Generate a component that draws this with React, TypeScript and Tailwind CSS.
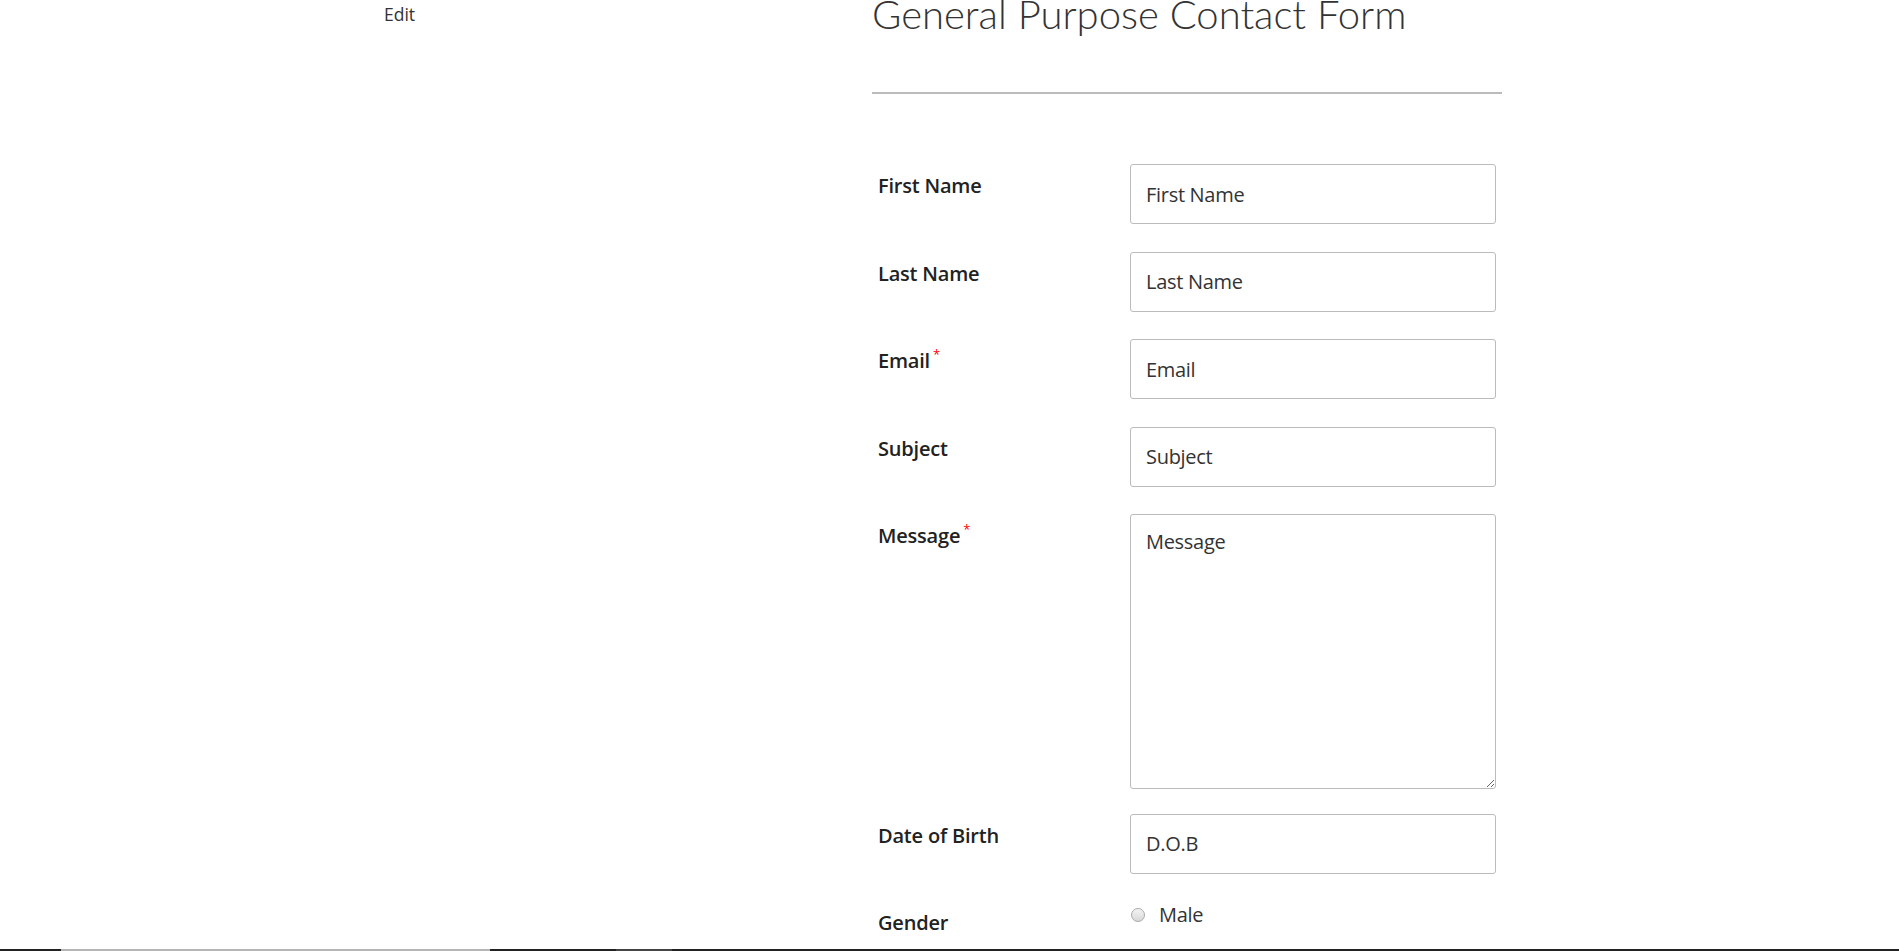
import React from 'react';

const BODY_FONT = { fontFamily: '"Open Sans", Lato, "Liberation Sans", sans-serif' };
const TITLE_FONT = { fontFamily: 'Lato, "Open Sans", sans-serif' };

const FIELDS = [
  { label: 'First Name', placeholder: 'First Name' },
  { label: 'Last Name', placeholder: 'Last Name' },
  { label: 'Email', placeholder: 'Email', required: true },
  { label: 'Subject', placeholder: 'Subject' },
];

function FieldLabel({ text, required }: { text: string; required?: boolean }) {
  return (
    <label className="pl-[6px] pt-[7px] text-[20px] font-semibold leading-[30px] tracking-[-0.2px] text-[#222]">
      {text}
      {required && <span className="relative -top-[9px] ml-[3px] text-[13px] font-normal text-[#ff0000]">*</span>}
    </label>
  );
}

const inputClass =
  'w-[366px] rounded-[3px] border border-[#bbb] bg-white px-[15px] text-[20px] tracking-[-0.3px] text-[#333] placeholder:text-[#333] outline-none';

export default function App() {
  return (
    <div className="flex h-[951px] w-full flex-col overflow-hidden bg-white" style={BODY_FONT}>
      <div className="flex min-h-0 flex-1 overflow-hidden">
        <div className="ml-[384px] w-[488px] shrink-0 pt-[2px] text-[17.5px] leading-[24px] text-[#333]">
          <a href="#">Edit</a>
        </div>

        <main className="w-[630px] shrink-0">
          <h1 className="-mt-[10px] text-[40px] font-light leading-[48px] text-[#333]" style={TITLE_FONT}>
            General Purpose Contact Form
          </h1>
          <div className="mt-[54px] h-[2px] w-[630px] bg-[#bbb]" />

          <form className="mt-[70px] flex flex-col gap-[27.5px]">
            {FIELDS.map((f) => (
              <div key={f.label} className="grid grid-cols-[258px_366px]">
                <FieldLabel text={f.label} required={f.required} />
                <input className={`${inputClass} h-[60px]`} placeholder={f.placeholder} />
              </div>
            ))}

            <div className="-mb-[3px] grid grid-cols-[258px_366px]">
              <FieldLabel text="Message" required />
              <textarea
                className={`${inputClass} block h-[275px] resize-y pt-[12px] leading-[30px]`}
                placeholder="Message"
              />
            </div>

            <div className="grid grid-cols-[258px_366px]">
              <FieldLabel text="Date of Birth" />
              <input className={`${inputClass} h-[60px]`} placeholder="D.O.B" />
            </div>

            <div className="grid grid-cols-[258px_366px] items-start">
              <FieldLabel text="Gender" />
              <div className="flex h-[27px] items-center gap-[14px] pl-[1px] text-[20px] tracking-[-0.3px] text-[#333]">
                <span className="h-[14px] w-[14px] rounded-full border border-[#a9a9a9] bg-gradient-to-b from-[#f4f4f4] to-[#d8d8d8]" />
                <span>Male</span>
              </div>
            </div>
          </form>
        </main>
      </div>

      <div className="flex h-[2px] w-full shrink-0">
        <div className="w-[61px] bg-[#222]" />
        <div className="w-[429px] bg-[#b5b5b5]" />
        <div className="w-[126px] bg-[#222]" />
        <div className="w-[56px] bg-[#444]" />
        <div className="flex-1 bg-[#222]" />
      </div>
    </div>
  );
}
